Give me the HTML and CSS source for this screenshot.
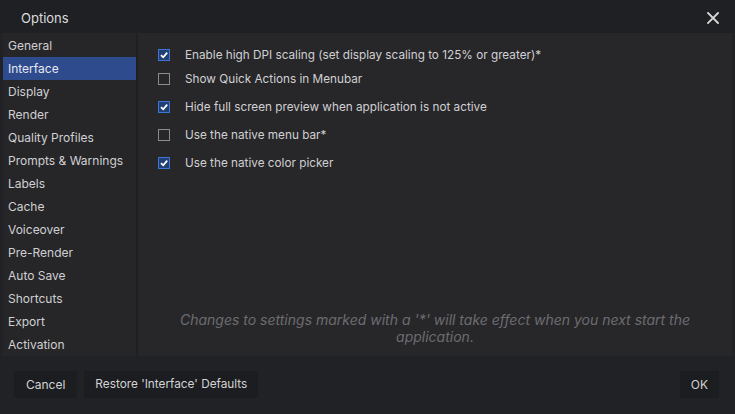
FILE: index.html
```html
<!DOCTYPE html>
<html>
<head>
<meta charset="utf-8">
<link rel="stylesheet" href="styles.css">
</head>
<body>
<div class="dialog">
  <div class="titlebar">
    <span class="title">Options</span>
    <span class="close"><svg width="12" height="12" viewBox="0 0 12 12"><path d="M1 1L11 11M11 1L1 11" stroke="#d6d6d6" stroke-width="1.9" stroke-linecap="square"/></svg></span>
  </div>
  <div class="main">
    <ul class="sidebar">
      <li>General</li>
      <li class="active">Interface</li>
      <li>Display</li>
      <li>Render</li>
      <li>Quality Profiles</li>
      <li>Prompts &amp; Warnings</li>
      <li>Labels</li>
      <li>Cache</li>
      <li>Voiceover</li>
      <li>Pre-Render</li>
      <li>Auto Save</li>
      <li>Shortcuts</li>
      <li>Export</li>
      <li>Activation</li>
    </ul>
    <div class="content">
      <div class="options">
        <div class="opt first"><span class="cb on"><svg width="10" height="10" viewBox="0 0 10 10"><path d="M2 5.2L4.2 7.3L8.2 2.6" fill="none" stroke="#fff" stroke-width="1.8"/></svg></span><span>Enable high DPI scaling (set display scaling to 125% or greater)*</span></div>
        <div class="opt"><span class="cb"></span><span>Show Quick Actions in Menubar</span></div>
        <div class="opt"><span class="cb on"><svg width="10" height="10" viewBox="0 0 10 10"><path d="M2 5.2L4.2 7.3L8.2 2.6" fill="none" stroke="#fff" stroke-width="1.8"/></svg></span><span>Hide full screen preview when application is not active</span></div>
        <div class="opt"><span class="cb"></span><span>Use the native menu bar*</span></div>
        <div class="opt"><span class="cb on"><svg width="10" height="10" viewBox="0 0 10 10"><path d="M2 5.2L4.2 7.3L8.2 2.6" fill="none" stroke="#fff" stroke-width="1.8"/></svg></span><span>Use the native color picker</span></div>
      </div>
      <p class="note">Changes to settings marked with a '*' will take effect when you next start the application.</p>
    </div>
  </div>
  <div class="footer">
    <div class="left">
      <button class="btn">Cancel</button>
      <button class="btn restore">Restore 'Interface' Defaults</button>
    </div>
    <button class="btn ok">OK</button>
  </div>
</div>
</body>
</html>
```
FILE: styles.css
```css
* { box-sizing: border-box; }
html, body {
  margin: 0;
  padding: 0;
  background: #202124;
  font-family: Inter, "Noto Sans", sans-serif;
  color: #d2d2d4;
}
.dialog {
  width: 735px;
  height: 414px;
  display: flex;
  flex-direction: column;
  background: #212225;
}
.titlebar {
  height: 33px;
  display: flex;
  align-items: center;
  justify-content: space-between;
  padding: 2px 16px 0 21px;
  background: #1f2023;
}
.title {
  font-size: 13px;
  color: #dcdcdc;
}
.close {
  display: flex;
  align-items: center;
}
.main {
  height: 323px;
  display: flex;
  margin: 0 3px;
}
.sidebar {
  list-style: none;
  margin: 0;
  padding: 1px 0 0 0;
  width: 135px;
  flex: none;
  background: #262629;
  border-right: 2px solid #202023;
}
.sidebar li {
  height: 23px;
  line-height: 23px;
  padding-left: 5px;
  font-size: 12px;
  color: #d0d0d2;
  white-space: nowrap;
}
.sidebar li.active {
  background: #2e4b8e;
  color: #e6e9f0;
}
.content {
  flex: 1;
  background: #27272a;
  display: flex;
  flex-direction: column;
  justify-content: space-between;
  padding: 12px 0 11px 0;
}
.options {
  display: flex;
  flex-direction: column;
  padding-left: 20px;
}
.opt {
  display: flex;
  align-items: center;
  height: 28px;
  font-size: 11.75px;
  color: #d0d0d2;
}
.opt.first {
  height: 20px;
}
.cb {
  width: 12px;
  height: 12px;
  border: 1px solid #8c8c8f;
  margin-right: 15px;
  display: flex;
  align-items: center;
  justify-content: center;
}
.cb.on {
  border-color: #3d75d6;
  background: #223f74;
}
.note {
  margin: 0 auto;
  width: 540px;
  text-align: center;
  font-style: italic;
  font-size: 14px;
  line-height: 17px;
  color: #6c6c70;
}
.footer {
  flex: 1;
  display: flex;
  align-items: center;
  justify-content: space-between;
  padding: 0 16px 2px 14px;
}
.left {
  display: flex;
  gap: 7px;
}
.btn {
  height: 27px;
  border: none;
  background: #1c1d20;
  color: #d2d2d4;
  font-family: Inter, "Noto Sans", sans-serif;
  font-size: 12px;
  padding: 0 12px;
}
.restore {
  padding: 0 11px;
  font-size: 11.8px;
}
.ok {
  padding: 0 11px;
}
```
